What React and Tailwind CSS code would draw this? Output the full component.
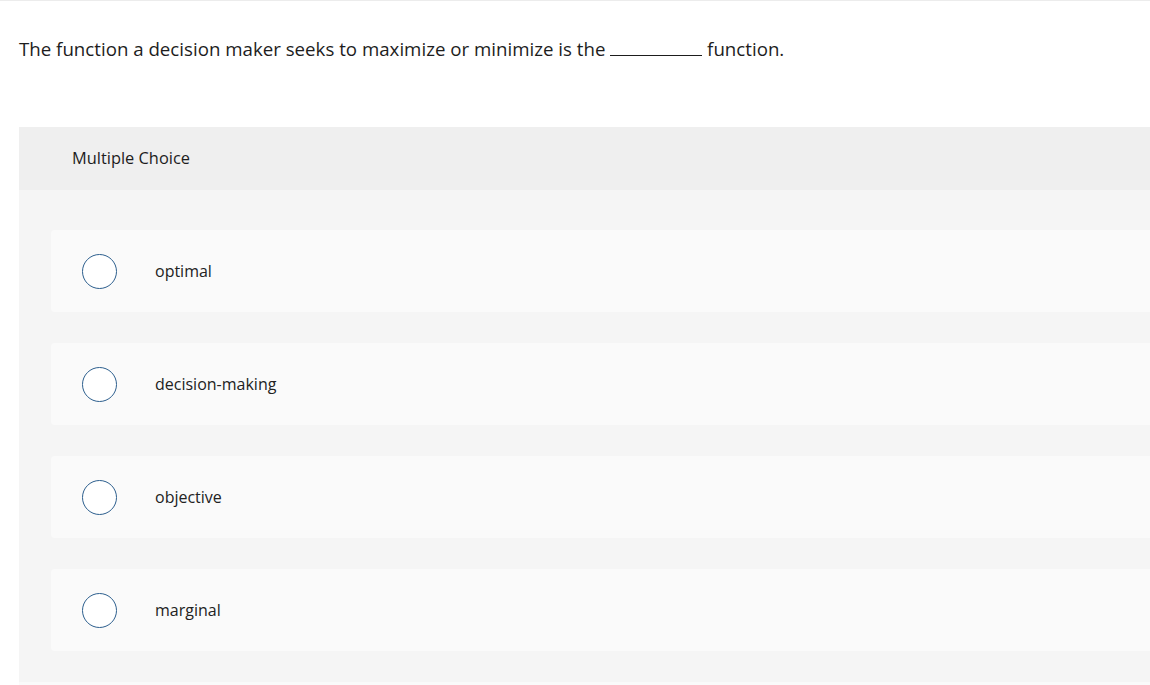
const options = ["optimal", "decision-making", "objective", "marginal"];

export default function App() {
  return (
    <div className="h-screen bg-white font-['Open_Sans',Arial,sans-serif] text-[#1d1d1d] overflow-hidden">
      <div className="h-[2px] border-t border-[#ececec]" />

      {/* Question */}
      <div className="pl-[19px] pt-[35px] text-[18.7px] leading-[24px]">
        The function a decision maker seeks to maximize or minimize is the{" "}
        <span className="inline-block w-[92px] border-b border-[#1d1d1d] align-baseline" />{" "}
        function.
      </div>

      {/* Multiple choice panel */}
      <div className="ml-[19px] mt-[66px]">
        <div className="h-[63px] bg-[#efefef] flex items-center pl-[53px] text-[16.4px]">
          Multiple Choice
        </div>
        <div className="bg-[#f5f5f5] pl-[32px] pt-[40px] pb-[31px] flex flex-col gap-[31px]">
          {options.map((opt) => (
            <div
              key={opt}
              className="h-[82px] bg-[#fafafa] rounded-l-[4px] flex items-center pl-[31px]"
            >
              <span className="w-[35px] h-[35px] rounded-full border-[1.5px] border-[#2d5f8e] bg-white shrink-0" />
              <span className="ml-[38px] text-[16px] text-[#222]">{opt}</span>
            </div>
          ))}
        </div>
        <div className="h-[40px] bg-[#fafafa]" />
      </div>
    </div>
  );
}
